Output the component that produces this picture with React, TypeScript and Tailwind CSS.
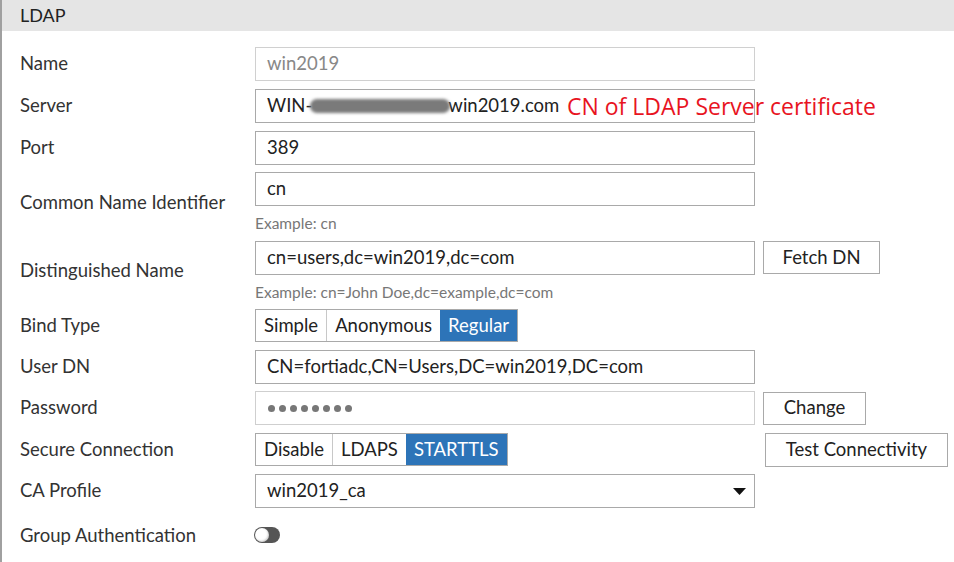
import React from "react";

const FONT = "font-['Lato','Open_Sans',sans-serif]";

type FieldRowProps = {
    label: string;
    hint?: string;
    children: React.ReactNode;
    side?: React.ReactNode;
};

function FieldRow({ label, hint, children, side }: FieldRowProps) {
    return (
        <div className="flex items-center">
            <div className="w-[253px] shrink-0 pl-[18px] text-[18.5px] text-[#333]">{label}</div>
            <div className="flex flex-col">
                <div className="flex items-center">
                    <div className="w-[500px]">{children}</div>
                    {side}
                </div>
                {hint && (
                    <div className="mt-[7px] h-[20px] text-[15.5px] leading-[20px] text-[#777]">{hint}</div>
                )}
            </div>
        </div>
    );
}

function TextBox({ value, disabled }: { value: React.ReactNode; disabled?: boolean }) {
    return (
        <div
            className={
                disabled
                    ? "flex h-[34px] items-center border border-[#d0d0d0] pl-[11px] text-[18.5px] text-[#888]"
                    : "flex h-[34px] items-center border border-[#a9a9a9] pl-[11px] text-[18.5px] text-[#222]"
            }
        >
            {value}
        </div>
    );
}

function SideButton({ text, className }: { text: string; className?: string }) {
    return (
        <div
            className={
                "flex h-[33px] items-center justify-center border border-[#a9a9a9] text-[18.5px] text-[#222] " +
                (className ?? "")
            }
        >
            {text}
        </div>
    );
}

function Segmented({ items, active }: { items: string[]; active: number }) {
    return (
        <div className="flex h-[33px] w-fit border border-[#a9a9a9]">
            {items.map((item, i) => (
                <div
                    key={item}
                    className={
                        i === active
                            ? "flex items-center bg-[#2d74b8] px-[8px] text-[18.5px] text-white"
                            : i === 0
                            ? "flex items-center px-[8px] text-[18.5px] text-[#222]"
                            : "flex items-center border-l border-[#c8c8c8] px-[8px] text-[18.5px] text-[#222]"
                    }
                >
                    {item}
                </div>
            ))}
        </div>
    );
}

export default function App() {
    return (
        <div className={`${FONT} h-[562px] w-[954px] overflow-hidden border-l-2 border-[#a0a0a0] bg-white`}>
            <div className="flex h-[31px] items-center bg-[#e5e5e5] pl-[18px] text-[18px] text-[#222]">LDAP</div>
            <div className="flex flex-col gap-[7.5px] pt-[16px]">
                <FieldRow label="Name">
                    <TextBox value="win2019" disabled />
                </FieldRow>
                <FieldRow
                    label="Server"
                    side={
                        <span className="ml-[-188px] font-['Open_Sans',sans-serif] text-[23px] text-[#e8141f]">
                            CN of LDAP Server certificate
                        </span>
                    }
                >
                    <TextBox
                        value={
                            <>
                                <span>WIN-</span>
                                <span className="mx-[-2px] inline-block h-[14px] w-[140px] rounded-full bg-[#7a7a7a] blur-[1.5px]" />
                                <span>win2019.com</span>
                            </>
                        }
                    />
                </FieldRow>
                <FieldRow label="Port">
                    <TextBox value="389" />
                </FieldRow>
                <FieldRow label="Common Name Identifier" hint="Example: cn">
                    <TextBox value="cn" />
                </FieldRow>
                <FieldRow
                    label="Distinguished Name"
                    hint="Example: cn=John Doe,dc=example,dc=com"
                    side={<SideButton text="Fetch DN" className="ml-[8px] w-[117px]" />}
                >
                    <TextBox value="cn=users,dc=win2019,dc=com" />
                </FieldRow>
                <FieldRow label="Bind Type">
                    <Segmented items={["Simple", "Anonymous", "Regular"]} active={2} />
                </FieldRow>
                <FieldRow label="User DN">
                    <TextBox value="CN=fortiadc,CN=Users,DC=win2019,DC=com" />
                </FieldRow>
                <FieldRow label="Password" side={<SideButton text="Change" className="ml-[8px] w-[103px]" />}>
                    <div className="flex h-[34px] items-center gap-[4px] border border-[#cfcfcf] pl-[12px]">
                        {[0, 1, 2, 3, 4, 5, 6, 7].map((i) => (
                            <span key={i} className="h-[7px] w-[7px] rounded-full bg-[#777]" />
                        ))}
                    </div>
                </FieldRow>
                <FieldRow
                    label="Secure Connection"
                    side={<SideButton text="Test Connectivity" className="ml-[10px] h-[34px] w-[183px]" />}
                >
                    <Segmented items={["Disable", "LDAPS", "STARTTLS"]} active={2} />
                </FieldRow>
                <FieldRow label="CA Profile">
                    <div className="flex h-[34px] items-center justify-between border border-[#a9a9a9] pl-[11px] pr-[8px] text-[18.5px] text-[#222]">
                        <span>win2019_ca</span>
                        <svg width="13" height="7" viewBox="0 0 13 7">
                            <polygon points="0,0 13,0 6.5,7" fill="#111" />
                        </svg>
                    </div>
                </FieldRow>
                <div className="mt-[6px] flex items-center">
                    <div className="w-[252px] shrink-0 pl-[18px] text-[18.5px] text-[#333]">Group Authentication</div>
                    <div className="relative h-[16px] w-[26px] rounded-full bg-[#555]">
                        <div className="absolute left-[1px] top-[1px] h-[14px] w-[14px] rounded-full bg-white shadow-[inset_-1px_-1px_2px_rgba(0,0,0,0.2)]" />
                    </div>
                </div>
            </div>
        </div>
    );
}
